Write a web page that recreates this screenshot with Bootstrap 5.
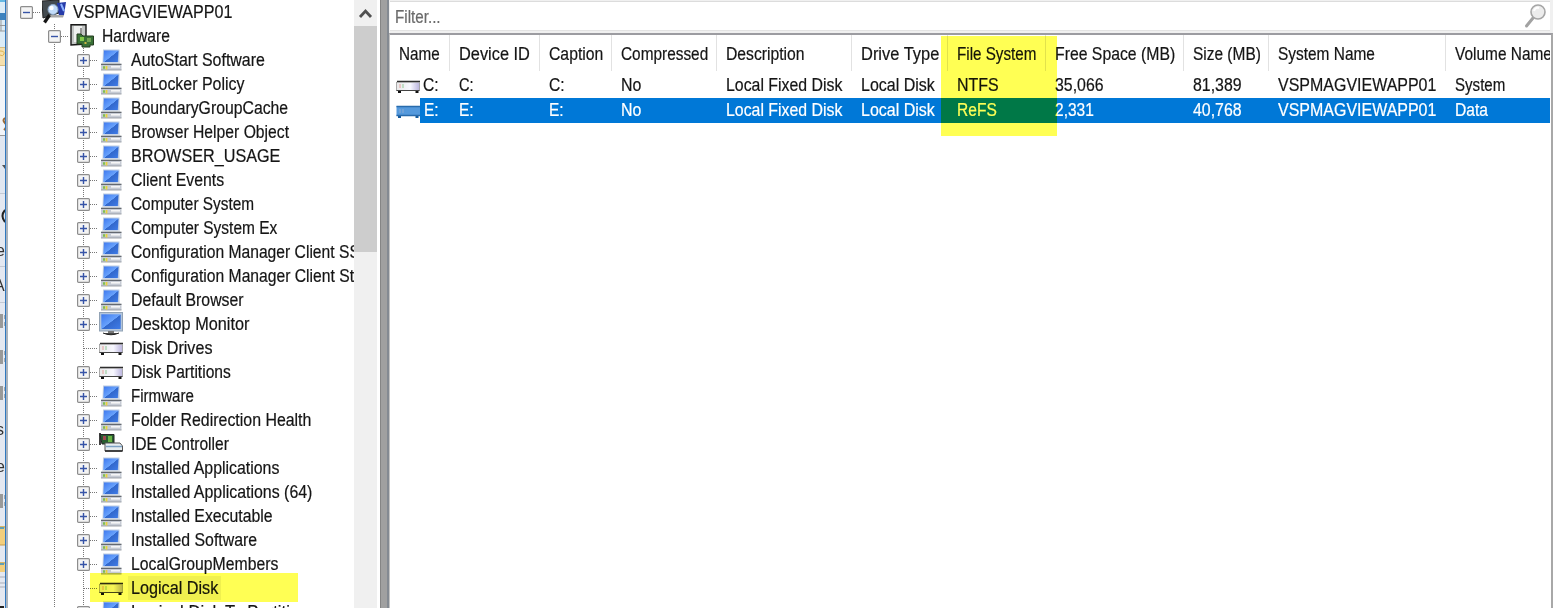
<!DOCTYPE html>
<html lang="en">
<head>
<meta charset="utf-8">
<title>VSPMAGVIEWAPP01 - Resource Explorer</title>
<link href="https://cdn.jsdelivr.net/npm/bootstrap@5.3.0/dist/css/bootstrap.min.css" rel="stylesheet">
<style>
html,body{height:100%}
body{font-family:"Liberation Sans",Arial,sans-serif;font-size:17.5px;color:#151515;background:#fff;overflow:hidden}
.window{height:608px;width:1553px;overflow:hidden}
.backdrop{width:5px;background:#e4e8f1}
.frame{width:3px;background:linear-gradient(90deg,#2f78c0 0 50%,#a9b2bd 50%)}
.tree{width:346px;background:#fff}
.node{height:24px;line-height:23px;white-space:nowrap;position:relative}
.fit{display:inline-block;transform-origin:0 50%;white-space:nowrap;-webkit-text-stroke:.2px currentColor}
.pic{width:24px;height:24px;flex:none}
.box{width:13px;height:13px;flex:none}
.dots{height:1px;flex:none;background:repeating-linear-gradient(90deg,#777 0 1px,#fff 1px 2px)}
.vline{position:absolute;width:1px;background:repeating-linear-gradient(#777 0 1px,#fff 1px 2px)}
.marker{position:absolute;background:#ffff54;mix-blend-mode:multiply;z-index:3}
.cur{background:#f0f0f0;height:24px;line-height:25px;width:93px;margin-left:-3px;padding-left:3px}
.scroller{width:23px;background:#f0f0f0}
.thumb{height:226px;background:#cdcdcd}
.splitter{width:9px;background:#a0a0a0;border-left:1px solid #858585;border-right:2px solid #848a92;margin-left:3px}
.filterbar{height:33px;background:#f0f0f0;padding:1px 3px 2px 1px}
.filterbox{background:#fff;border-top:1px solid #dcdcdc;border-bottom:1px solid #e3e3e3;color:#6a6a6a;padding-left:5px;padding-right:3px}
.filterbox .fit{margin-top:3px}
.listview{border-top:2px solid #9c9ca1;border-right:2px solid #a8a8a8;border-left:1px solid #c4c4c4;background:#fff}
.grid{table-layout:fixed;width:1160px;border-collapse:separate;border-spacing:0}
.grid th,.grid td{padding:0 0 0 9px;font-weight:400;white-space:nowrap;overflow:hidden;vertical-align:middle}
.grid th{height:38px}
.grid thead th{background:linear-gradient(#e2e2e2,#e2e2e2) 100% 0/1px 36px no-repeat}
.grid thead th:last-child{background:none}
.grid td{height:25px;line-height:25px}
.grid td:first-child{padding-left:6px}
.grid .picked td{background:#0078d7;color:#fff;height:25px}
.grid .picked td:first-child{background:linear-gradient(90deg,#fff 0 30px,#0078d7 30px)}
</style>
</head>
<body>
<svg width="0" height="0" class="position-absolute">
<defs>
<linearGradient id="blue" x1="0" y1="0" x2="1" y2="1"><stop offset="0" stop-color="#3d78ee"/><stop offset=".5" stop-color="#68a2fc"/><stop offset=".52" stop-color="#3268cc"/><stop offset="1" stop-color="#3f7ce8"/></linearGradient>
<linearGradient id="metal" x1="0" x2="1"><stop offset="0" stop-color="#e9e9e9"/><stop offset=".6" stop-color="#f7f7ff"/><stop offset="1" stop-color="#b9b3dd"/></linearGradient>
<symbol id="pc" viewBox="0 0 24 24"><path d="M4 1.500H20.500V15H3.500z" fill="#bccbe2"/><path d="M5 2.500H19.500L18.800 14.500H4.300z" fill="url(#blue)"/><path d="M3.500 14.300H20L22 16.500H2z" fill="#e4e7ea"/><rect x="2" y="16.500" width="20.500" height="5.500" fill="#c6cbd4"/><path d="M2 16.300H22.500" stroke="#4e545c" stroke-width="1.100"/><path d="M2 22H22.500" stroke="#8b9197" stroke-width=".8"/><path d="M4 19.500h2" stroke="#7fbf4f" stroke-width="2.500"/><path d="M7.500 18v3.500" stroke="#ead23c" stroke-width="1.800"/><path d="M12 18.800h9" stroke="#f6f6f6" stroke-width="1.600"/></symbol>
<symbol id="disk" viewBox="0 0 24 24"><path d="M1 7.500H24" stroke="#222" stroke-width="1.500"/><rect x=".5" y="8.300" width="23" height="8.200" fill="url(#metal)" stroke="#999" stroke-width=".8"/><path d="M.5 16.500H23.500" stroke="#444"/><path d="M2 17h3v2H2zM19.500 17h3v2h-3z" fill="#111"/><path d="M4 10v4" stroke="#e4a09b"/><path d="M7 10v4" stroke="#91c998"/></symbol>
<symbol id="diskblue" viewBox="0 0 24 24"><path d="M.5 7H24v10H.5z" fill="#5499dc"/><path d="M.5 7.500H24M.5 16.500H24" stroke="#286bac" stroke-width="1.300"/><path d="M2 17h3v2H2zM19.500 17h3v2h-3z" fill="#145a9d"/><path d="M4 10v4M7 10v4" stroke="#8eabd2"/></symbol>
<symbol id="screen" viewBox="0 0 24 24"><rect x=".5" y=".5" width="23" height="18.500" fill="#b4c6dc" stroke="#92a3b5"/><rect x="2.300" y="2.300" width="19.400" height="14.700" fill="url(#blue)"/><path d="M9 19h6v2H9z" fill="#777"/><path d="M4 21Q12 24.500 20 21" fill="#444" stroke="#222"/></symbol>
<symbol id="ide" viewBox="0 0 24 24"><path d="M1 1V13" stroke="#111" stroke-width="1.600"/><path d="M1 2.500H15V12H3z" fill="#285c31" stroke="#222"/><path d="M4 4h3v4H4z" fill="#9d4950"/><path d="M9 4h4v6H9z" fill="#67b344"/><path d="M6 11h15l2.500 3v5H6z" fill="#e6edf0" stroke="#555" stroke-width="1"/><path d="M7 14.500h16" stroke="#7ca1c4" stroke-width="1.500"/><path d="M6 19h17.500" stroke="#222" stroke-width="1.500"/></symbol>
<symbol id="tower" viewBox="0 0 24 24"><path d="M1 .8H16V20L1 21z" fill="#c3c6c5" stroke="#171717" stroke-width="1.400"/><path d="M4 2H12V18H4z" fill="#eef0ef"/><path d="M11 4v6" stroke="#777" stroke-width="1.500"/><path d="M7 10H11L13 12H23.500V21H20V23H12V20H7z" fill="#397037" stroke="#263d21"/><path d="M10 13h4v4h-4z" fill="#84c94b"/><path d="M17 14h4v4h-4z" fill="#72a354"/><path d="M14.500 18h2v2h-2z" fill="#d0b444"/></symbol>
<symbol id="search-pc" viewBox="0 0 24 24"><path d="M0 1L17 0V13L1 18z" fill="#444b50" stroke="#222"/><path d="M15 3L24 2L22 15L17 16z" fill="#263ba9"/><path d="M19 4L22 11" stroke="#8bb1ff" stroke-width="2"/><path d="M7 15H22L21 17.500H7z" fill="#a7a7a7"/><circle cx="11" cy="9.500" r="5" fill="#c2dcfa" stroke="#8da6c4"/><circle cx="9.500" cy="8" r="2.200" fill="#fff"/><path d="M7.500 15L2.500 22.500" stroke="#151515" stroke-width="3.200"/></symbol>
<symbol id="plus" viewBox="0 0 13 13"><rect x=".6" y=".6" width="11.800" height="11.800" rx="1" fill="#f4f4f4" stroke="#8d8d8d" stroke-width="1.200"/><path d="M3 6.500h7M6.500 3v7" stroke="#3754a7" stroke-width="1.400"/></symbol>
<symbol id="minus" viewBox="0 0 13 13"><rect x=".6" y=".6" width="11.800" height="11.800" rx="1" fill="#f4f4f4" stroke="#8d8d8d" stroke-width="1.200"/><path d="M3 6.500h7" stroke="#3754a7" stroke-width="1.400"/></symbol>
</defs></svg>

<div class="window d-flex">
  <div class="backdrop flex-shrink-0">
    <svg width="5" height="608" class="d-block">
      <rect width="5" height="48" fill="#dcecf7"/><path d="M0 0h5v2H0z" fill="#65b8e2"/><path d="M0 13h5v7H0z" fill="#3e82bd"/><path d="M0 25.500h5M0 31h5M1 20v11" stroke="#999"/>
      <rect y="47" width="5" height="18" fill="#f5dfad"/><path d="M0 47.500h5M0 65.500h5" stroke="#d6bd83"/><path d="M0 51q5 0 4 3t-4 1" fill="none" stroke="#dcb34d"/><rect y="66" width="5" height="69" fill="#f3f5f9"/>
      <path d="M5 118q-3 2 0 5q3 3-1 7" fill="none" stroke="#9c6a36" stroke-width="2"/><path d="M0 135.500h5" stroke="#999"/>
      <rect y="136" width="5" height="57" fill="#e1e7f1"/><path d="M2 165h3v4z" fill="#555"/><path d="M0 193.500h5M0 266.500h5M0 302.500h5" stroke="#c4c9d3"/>
      <path d="M5 210q-5 6 0 12" fill="none" stroke="#222" stroke-width="2"/>
      <g font-family="Liberation Sans, sans-serif" font-size="16" fill="#333"><text x="-4" y="256">e</text><text x="-6" y="291">A</text><text x="-4" y="435">s</text><text x="-4" y="472">e</text></g>
      <path d="M0 314h3v14H0zM0 350h3v14H0zM0 386h3v14H0zM0 494h3v14H0z" fill="#999"/><path d="M4.500 315v12M4.500 351v12M4.500 387v12M4.500 495v12" stroke="#aaa" stroke-dasharray="4 3"/>
      <path d="M0 526h5v19H0zM0 562h5v10H0z" fill="#f3ce7c"/><path d="M0 527h5M0 545h5M0 563h5" stroke="#c49c4c"/><path d="M0 528h4M0 564h4" stroke="#629fb3" stroke-width="2"/>
      <path d="M0 577h5M0 583h5M0 587h5" stroke="#a9adb7"/><path d="M0 606h4v2H0z" fill="#222"/>
    </svg>
  </div>
  <div class="frame flex-shrink-0"></div>
  <nav class="tree position-relative overflow-hidden flex-shrink-0" id="tree">
    <i class="vline" style="left:46px;top:24px;height:584px"></i>
    <i class="vline" style="left:75px;top:48px;height:560px"></i>
    <div class="marker" style="left:82px;top:573px;width:208px;height:29px"></div>
  </nav>
  <div class="scroller d-flex flex-column flex-shrink-0">
    <svg width="23" height="26"><path d="M6 17l5.500-6 5.500 6" fill="none" stroke="#505050" stroke-width="2.800"/></svg>
    <div class="thumb"></div>
  </div>
  <div class="splitter flex-shrink-0"></div>
  <main class="d-flex flex-column flex-grow-1 overflow-hidden">
    <div class="filterbar d-flex flex-shrink-0">
      <div class="filterbox d-flex flex-grow-1 align-items-center justify-content-between">
        <span class="fit" data-w="46">Filter...</span>
        <svg width="23" height="26" viewBox="0 0 23 26"><path d="M9 15L2.500 23" stroke="#a2a2a2" stroke-width="3" stroke-linecap="round"/><circle cx="14" cy="9" r="7" fill="#ececec" stroke="#a5a5a5" stroke-width="1.600"/><path d="M10 8q1-4 5-3" stroke="#fff" stroke-width="2" fill="none"/></svg>
      </div>
    </div>
    <div class="listview flex-grow-1 position-relative overflow-hidden">
      <table class="grid"><colgroup id="cols"></colgroup><thead><tr id="head"></tr></thead><tbody id="rows"></tbody></table>
      <div class="marker" style="left:551px;top:1px;width:116px;height:100px"></div>
    </div>
  </main>
</div>
<script src="https://cdn.jsdelivr.net/npm/bootstrap@5.3.0/dist/js/bootstrap.bundle.min.js"></script>
<script>
// label, drawn width, icon, expander, indent
const nodes = [
 ['VSPMAGVIEWAPP01',159,'search-pc','minus',12],['Hardware',68,'tower','minus',40],
 ['AutoStart Software',134],['BitLocker Policy',114],['BoundaryGroupCache',157],['Browser Helper Object',158],
 ['BROWSER_USAGE',149],['Client Events',93],['Computer System',123],['Computer System Ex',146],
 ['Configuration Manager Client SS',229],['Configuration Manager Client St',223],['Default Browser',113],
 ['Desktop Monitor',118,'screen'],['Disk Drives',81,'disk','none'],['Disk Partitions',100,'disk'],['Firmware',63],
 ['Folder Redirection Health',180],['IDE Controller',98,'ide'],['Installed Applications',148],
 ['Installed Applications (64)',181],['Installed Executable',142],['Installed Software',126],
 ['LocalGroupMembers',147],['Logical Disk',87,'disk','none'],['Logical Disk To Partition',177]];
const tree = document.getElementById('tree');
nodes.forEach(([label,w,icon='pc',box='plus',indent=69]) => {
  const lead = box === 'none'
    ? `<i class="dots" style="width:14px;margin-left:7px"></i>`
    : `<svg class="box"><use href="#${box}"/></svg><i class="dots" style="width:8px"></i>`;
  const cur = label === 'Logical Disk' ? 'cur' : '';
  const before = indent === 69 ? 1 : 1, after = indent === 12 ? 7 : indent === 40 ? 8 : 7.5;
  tree.insertAdjacentHTML('beforeend', `<div class="node d-flex align-items-center" style="padding-left:${indent}px">${lead}<svg class="pic" style="margin-left:${before}px;margin-right:${after}px"><use href="#${icon}"/></svg><span class="${cur}"><span class="fit" data-w="${w}">${label}</span></span></div>`);
});
const cols = [['Name',41,60],['Device ID',71,90],['Caption',54,72],['Compressed',87,105],['Description',79,135],['Drive Type',78,96],
 ['File System',79,98],['Free Space (MB)',120,138],['Size (MB)',68,85],['System Name',97,177],['Volume Name',97,104]];
const rows = [
 [['C:',16],['C:',15],['C:',16],['No',20],['Local Fixed Disk',116],['Local Disk',74],['NTFS',42],['35,066',49],['81,389',49],['VSPMAGVIEWAPP01',158],['System',50]],
 [['E:',15],['E:',15],['E:',15],['No',20],['Local Fixed Disk',116],['Local Disk',74],['ReFS',40],['2,331',39],['40,768',49],['VSPMAGVIEWAPP01',158],['Data',33]]];
const text = ([t,w]) => `<span class="fit" data-w="${w}">${t}</span>`;
document.getElementById('cols').innerHTML = cols.map(c => `<col style="width:${c[2]}px">`).join('');
document.getElementById('head').innerHTML = cols.map(c => `<th>${text(c)}</th>`).join('');
document.getElementById('rows').innerHTML = rows.map((r,n) => `<tr class="${n ? 'picked' : ''}">` + r.map((c,i) =>
  i ? `<td>${text(c)}</td>` : `<td><div class="d-flex align-items-center"><svg class="pic" style="margin-right:${n ? 4 : 3}px"><use href="#${n ? 'diskblue' : 'disk'}"/></svg>${text(c)}</div></td>`).join('') + '</tr>').join('');
document.querySelectorAll('.fit').forEach(e => { e.style.transform = `scaleX(${e.dataset.w / e.offsetWidth})`; });
</script>
</body>
</html>
